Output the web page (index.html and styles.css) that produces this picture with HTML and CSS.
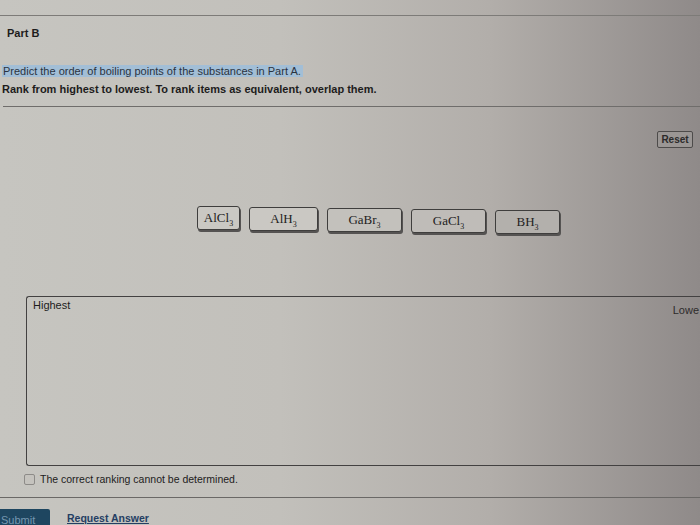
FILE: index.html
```html
<!DOCTYPE html>
<html>
<head>
<meta charset="utf-8">
<link rel="stylesheet" href="styles.css">
</head>
<body>
<div class="page">
  <div class="topline"></div>
  <div class="part">Part B</div>
  <div class="prompt"><span class="hl">Predict the order of boiling points of the substances in Part A.</span></div>
  <div class="rank">Rank from highest to lowest. To rank items as equivalent, overlap them.</div>
  <div class="box">
    <div class="tools">
      <button class="reset">Reset</button>
      <button class="help"></button>
    </div>
    <div class="tiles">
      <div class="tile t1">AlCl<sub>3</sub></div>
      <div class="tile t2">AlH<sub>3</sub></div>
      <div class="tile t3">GaBr<sub>3</sub></div>
      <div class="tile t4">GaCl<sub>3</sub></div>
      <div class="tile t5">BH<sub>3</sub></div>
    </div>
    <div class="target">
      <span class="hi">Highest</span>
      <span class="lo">Lowe</span>
    </div>
  </div>
  <label class="check"><span class="cb"></span>The correct ranking cannot be determined.</label>
  <div class="actions">
    <button class="submit">Submit</button>
    <a class="request">Request Answer</a>
  </div>
</div>
</body>
</html>
```
FILE: styles.css
```css
html, body {
  margin: 0;
  padding: 0;
}
body {
  width: 700px;
  height: 525px;
  overflow: hidden;
  font-family: "Liberation Sans", Arial, sans-serif;
  color: #1d1c1c;
  background: linear-gradient(90deg, #c6c5c0 0%, #c2c0bb 40%, #b2aeaa 70%, #8f8a89 100%);
}
.page {
  height: 525px;
}
.topline {
  height: 15px;
  border-bottom: 1px solid #7d7b78;
}
.part {
  margin-top: 10px;
  padding-left: 7px;
  font-size: 11px;
  font-weight: bold;
  line-height: 14px;
}
.prompt {
  margin-top: 25px;
  padding-left: 2px;
  font-size: 11px;
  line-height: 13px;
}
.hl {
  background: #a2bed6;
  color: #2a3340;
  padding: 0 2px 0 1px;
}
.rank {
  margin-top: 5px;
  padding-left: 2px;
  font-size: 11px;
  font-weight: bold;
  line-height: 13px;
}
.box {
  margin-top: 10px;
  margin-left: 3px;
  border-top: 1px solid #6f6d6b;
  display: flex;
  flex-direction: column;
}
.tools {
  display: flex;
  justify-content: flex-end;
  gap: 7px;
  margin-top: 24px;
  margin-right: -5px;
}
.reset {
  font-family: "Liberation Sans", Arial, sans-serif;
  font-size: 10px;
  font-weight: bold;
  color: #2b2a2a;
  background: #9a9694;
  border: 1px solid #4d4b4a;
  border-radius: 2px;
  height: 17px;
  width: 36px;
  padding: 0;
}
.help {
  width: 5px;
  height: 17px;
  background: #958f8e;
  border: 1px solid #4d4b4a;
  border-right: none;
  padding: 0;
}
.tiles {
  display: flex;
  align-items: flex-start;
  gap: 9px;
  margin-top: 58px;
  margin-left: 194px;
}
.tile {
  height: 24px;
  box-sizing: border-box;
  border: 1px solid #3f3e3d;
  border-radius: 3px;
  background: #cac8c3;
  box-shadow: 1px 2px 0 #555352;
  font-family: "Liberation Serif", "Times New Roman", serif;
  font-size: 13px;
  line-height: 21px;
  text-align: center;
  color: #222;
}
.tile sub {
  font-size: 8px;
  line-height: 0;
}
.t1 { width: 43px; }
.t2 { width: 69px; margin-top: 1px; }
.t3 { width: 75px; margin-top: 2px; background: #c3c1bc; }
.t4 { width: 75px; margin-top: 3px; background: #bfbcb8; }
.t5 { width: 65px; margin-top: 4px; background: #b3b0ac; }
.target {
  margin-top: 62px;
  margin-left: 23px;
  height: 168px;
  border: 1px solid #434141;
  border-right: none;
  border-radius: 3px 0 0 3px;
  display: flex;
  justify-content: space-between;
  align-items: flex-start;
  font-size: 11px;
}
.hi {
  margin: 2px 0 0 6px;
}
.lo {
  margin: 7px 1px 0 0;
  color: #2d2b2b;
}
.check {
  display: flex;
  align-items: center;
  gap: 5px;
  margin: 6px 0 0 24px;
  font-size: 10.5px;
  height: 14px;
}
.cb {
  width: 9px;
  height: 9px;
  border: 1px solid #8d8b88;
  border-radius: 2px;
  background: #c5c3be;
}
.actions {
  margin-top: 11px;
  border-top: 1px solid #6a6866;
  padding-top: 11px;
  display: flex;
  align-items: flex-start;
  gap: 17px;
}
.submit {
  width: 50px;
  height: 20px;
  background: #1e4660;
  color: #7597b0;
  border: none;
  border-radius: 0 2px 0 0;
  font-family: "Liberation Sans", Arial, sans-serif;
  font-size: 11px;
  text-align: left;
  padding: 2px 0 0 1px;
}
.request {
  margin-top: 3px;
  font-size: 10.5px;
  font-weight: bold;
  color: #243e63;
  text-decoration: underline;
}
```
